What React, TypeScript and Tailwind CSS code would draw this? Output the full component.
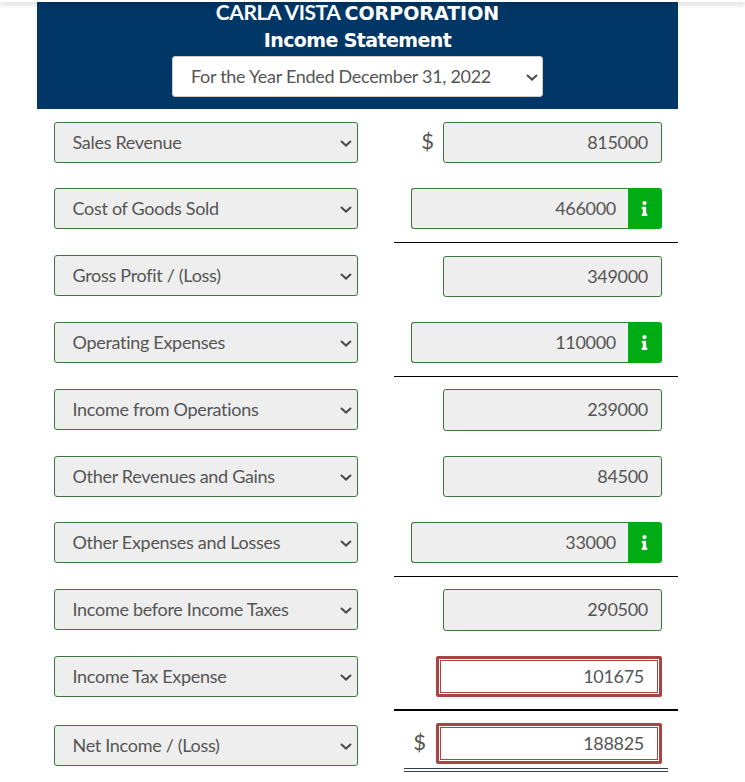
import React from 'react';
import { FaInfo } from 'react-icons/fa';

type Row = {
  label: string;
  value: string;
  rowClass: string;
  fieldClass?: string;
  dollar?: boolean;
  info?: boolean;
  rule?: boolean;
  error?: boolean;
};

const rows: Row[] = [
  { label: 'Sales Revenue', value: '815000', rowClass: 'h-[66px]', fieldClass: 'h-[41px]', dollar: true },
  { label: 'Cost of Goods Sold', value: '466000', rowClass: 'h-[67px]', info: true, rule: true },
  { label: 'Gross Profit / (Loss)', value: '349000', rowClass: 'h-[67px]', fieldClass: 'mt-[1px] h-[41px]' },
  { label: 'Operating Expenses', value: '110000', rowClass: 'h-[67px]', info: true, rule: true },
  { label: 'Income from Operations', value: '239000', rowClass: 'h-[67px]', fieldClass: 'h-[42px]' },
  { label: 'Other Revenues and Gains', value: '84500', rowClass: 'h-[66px]', fieldClass: 'h-[41px]' },
  { label: 'Other Expenses and Losses', value: '33000', rowClass: 'h-[67px]', info: true, rule: true },
  { label: 'Income before Income Taxes', value: '290500', rowClass: 'h-[67px]', fieldClass: 'h-[42px]' },
  { label: 'Income Tax Expense', value: '101675', rowClass: 'h-[69px]', error: true },
  { label: 'Net Income / (Loss)', value: '188825', rowClass: 'h-[57px]', error: true, dollar: true },
];

const Chevron: React.FC<{ className: string }> = ({ className }) => (
  <svg
    className={`pointer-events-none absolute top-[18px] ${className}`}
    width="12"
    height="7"
    viewBox="0 0 12 7"
    fill="none"
    stroke="#4a4a4a"
    strokeWidth="2"
  >
    <path d="M1 1l5 4.6L11 1" />
  </svg>
);

const ValueField: React.FC<{ row: Row }> = ({ row }) => {
  if (row.error) {
    return (
      <input
        readOnly
        defaultValue={row.value}
        className="h-[41px] w-[226px] rounded-[2px] border-[3px] border-[#a94442] bg-white pb-[1px] pr-[15px] text-right text-[18px] tracking-[-0.3px] text-[#555] shadow-[inset_0_0_0_1px_#fff,inset_0_0_0_2px_#a94442]"
      />
    );
  }
  if (row.info) {
    return (
      <div className="flex h-[41px] w-[251px]">
        <input
          readOnly
          defaultValue={row.value}
          className="min-w-0 flex-1 rounded-l-[3px] border border-r-0 border-[#3c763d] bg-[#eee] pb-[1px] pr-[12px] text-right text-[18px] tracking-[-0.3px] text-[#555]"
        />
        <div className="flex w-[34px] items-center justify-center rounded-r-[3px] bg-[#00ac14] pr-[2px] text-white">
          <FaInfo size={15} />
        </div>
      </div>
    );
  }
  return (
    <input
      readOnly
      defaultValue={row.value}
      className={`w-[219px] rounded-[3px] border border-[#3c763d] bg-[#eee] pb-[2px] pr-[13px] text-right text-[18px] tracking-[-0.3px] text-[#555] ${row.fieldClass}`}
    />
  );
};

const StatementRow: React.FC<{ row: Row }> = ({ row }) => (
  <div className={`relative flex justify-between pl-[54px] pr-[83px] ${row.rowClass}`}>
    <div className="relative h-[41px] w-[304px]">
      <select
        defaultValue={row.label}
        className="h-full w-full appearance-none rounded-[3px] border border-[#3c763d] bg-[#eee] pl-[17.5px] text-[18px] tracking-[-0.3px] text-[#555]"
      >
        <option>{row.label}</option>
      </select>
      <Chevron className="right-[6px]" />
    </div>
    <div className={`flex items-start ${row.error && row.dollar ? '-mt-[2px]' : ''}`}>
      {row.dollar && (
        <span className={`text-[22px] leading-[38px] text-[#555] ${row.error ? 'mr-[10px]' : 'mr-[9px]'}`}>$</span>
      )}
      <ValueField row={row} />
    </div>
    {row.rule && <div className="absolute left-[394px] top-[54px] h-px w-[284px] bg-black" />}
    {row.error && !row.dollar && <div className="absolute left-[394px] top-[53px] h-[2px] w-[284px] bg-black" />}
    {row.error && row.dollar && (
      <div className="absolute left-[404px] top-[43px] h-[4px] w-[264px] border-y border-[#2c3e50]" />
    )}
  </div>
);

const App: React.FC = () => (
  <div className="relative h-[782px] w-[745px] overflow-hidden bg-white font-['Lato',sans-serif]">
    <div className="absolute inset-x-0 top-0 h-[2px] bg-white shadow-[0_2px_5px_rgba(0,0,0,0.3)]" />
    <div className="mx-[37px] mb-[13px] mt-[2px] flex h-[107px] w-[641px] flex-col items-center bg-[#003767] text-white">
      <div className="h-[20px] text-[21px] leading-[20px] font-bold tracking-[-0.4px]">
        CARLA VISTA{' '}
        <span className="font-['DejaVu_Sans',sans-serif] text-[19px] tracking-normal">CORPORATION</span>
      </div>
      <div className="mt-[6px] font-['DejaVu_Sans',sans-serif] text-[19px] leading-[24px] font-bold tracking-[-0.6px]">
        Income Statement
      </div>
      <div className="relative mt-[4px] h-[41px] w-[371px]">
        <select
          defaultValue="For the Year Ended December 31, 2022"
          className="h-full w-full appearance-none rounded-[3px] border border-[#ccc] bg-white pl-[18px] text-[18px] tracking-[-0.3px] text-[#555]"
        >
          <option>For the Year Ended December 31, 2022</option>
        </select>
        <Chevron className="right-[5px]" />
      </div>
    </div>
    {rows.map((row) => (
      <StatementRow key={row.label} row={row} />
    ))}
  </div>
);

export default App;
